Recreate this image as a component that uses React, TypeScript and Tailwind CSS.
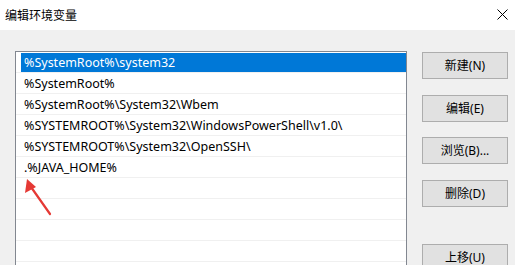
import React from "react";

const rows = [
  "%SystemRoot%\\system32",
  "%SystemRoot%",
  "%SystemRoot%\\System32\\Wbem",
  "%SYSTEMROOT%\\System32\\WindowsPowerShell\\v1.0\\",
  "%SYSTEMROOT%\\System32\\OpenSSH\\",
  ".%JAVA_HOME%",
  "",
  "",
  "",
  "",
];

const font = { fontFamily: '"Noto Sans", "Noto Sans CJK SC", sans-serif' };

function Btn({ label, className = "" }: { label: string; className?: string }) {
  return (
    <div
      className={`h-[27px] w-[86px] border border-[#adadad] bg-[#e1e1e1] flex items-center justify-center text-[12px] text-black ${className}`}
    >
      {label}
    </div>
  );
}

export default function App() {
  return (
    <div className="w-[515px] h-[265px] overflow-hidden bg-[#f0f0f0] relative" style={font}>
      <div className="h-[30px] bg-white flex items-center justify-between pl-[5px] pr-[7px]">
        <span className="text-[12px] text-black leading-none" style={{ fontFamily: '"Noto Sans CJK SC", sans-serif' }}>
          编辑环境变量
        </span>
        <svg width="11" height="11" viewBox="0 0 11 11" className="mb-[2px]">
          <path d="M0.5 0.5 L10.5 10.5 M10.5 0.5 L0.5 10.5" stroke="#000" strokeWidth="1" />
        </svg>
      </div>
      <div className="flex pl-[15px] pt-[21px] gap-[15px]">
        <div className="w-[392px] h-[240px] border border-[#828790] bg-white">
          {rows.map((r, i) => (
            <div key={i} className="h-[21px] border-b border-[#f0f0f0] relative">
              {i === 0 ? (
                <div className="absolute left-[5px] right-0 top-[1px] h-[19px] bg-[#0078d7]" />
              ) : null}
              <span
                className={`absolute left-[8px] top-[1px] h-[21px] flex items-center text-[12.5px] whitespace-nowrap ${
                  i === 0 ? "text-white" : "text-black"
                }`}
              >
                {r}
              </span>
            </div>
          ))}
        </div>
        <div className="flex flex-col pt-[1px]">
          <Btn label="新建(N)" />
          <Btn label="编辑(E)" className="mt-[16px]" />
          <Btn label="浏览(B)..." className="mt-[15px]" />
          <Btn label="删除(D)" className="mt-[16px]" />
          <Btn label="上移(U)" className="mt-[37px]" />
        </div>
      </div>
      <svg className="absolute left-0 top-0 pointer-events-none" width="515" height="265">
        <line x1="50" y1="214" x2="31" y2="187" stroke="#e53935" strokeWidth="2.2" strokeLinecap="round" />
        <polygon points="27,179 25,193 36,187" fill="#e53935" />
      </svg>
    </div>
  );
}
